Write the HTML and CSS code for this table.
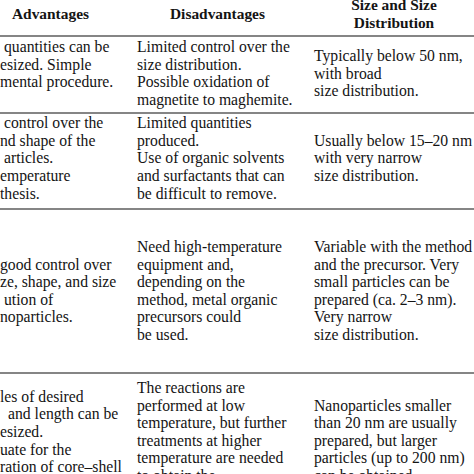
FILE: index.html
```html
<!DOCTYPE html>
<html>
<head>
<meta charset="utf-8">
<link rel="stylesheet" href="styles.css">
</head>
<body>
<div class="table">
  <div class="row head">
    <div class="cell c1">Advantages</div>
    <div class="cell c2">Disadvantages</div>
    <div class="cell c3">Size and Size<br>Distribution</div>
  </div>
  <div class="row r1">
    <div class="cell c1"><div class="l i4">quantities can be</div><div class="l">esized. Simple</div><div class="l">mental procedure.</div></div>
    <div class="cell c2">Limited control over the<br>size distribution.<br>Possible oxidation of<br>magnetite to maghemite.</div>
    <div class="cell c3">Typically below 50 nm,<br>with broad<br>size distribution.</div>
  </div>
  <div class="row r2">
    <div class="cell c1"><div class="l i4">control over the</div><div class="l">nd shape of the</div><div class="l i4">articles.</div><div class="l">emperature</div><div class="l">thesis.</div></div>
    <div class="cell c2">Limited quantities<br>produced.<br>Use of organic solvents<br>and surfactants that can<br>be difficult to remove.</div>
    <div class="cell c3">Usually below 15–20 nm<br>with very narrow<br>size distribution.</div>
  </div>
  <div class="row r3">
    <div class="cell c1"><div class="l">good control over</div><div class="l">ze, shape, and size</div><div class="l i4">ution of</div><div class="l">noparticles.</div></div>
    <div class="cell c2">Need high-temperature<br>equipment and,<br>depending on the<br>method, metal organic<br>precursors could<br>be used.</div>
    <div class="cell c3">Variable with the method<br>and the precursor. Very<br>small particles can be<br>prepared (ca. 2–3 nm).<br>Very narrow<br>size distribution.</div>
  </div>
  <div class="row r4">
    <div class="cell c1"><div class="l">les of desired</div><div class="l i8">and length can be</div><div class="l">esized.</div><div class="l">uate for the</div><div class="l">ration of core–shell</div><div class="l">noparticles.</div></div>
    <div class="cell c2">The reactions are<br>performed at low<br>temperature, but further<br>treatments at higher<br>temperature are needed<br>to obtain the<br>crystalline structure.</div>
    <div class="cell c3">Nanoparticles smaller<br>than 20 nm are usually<br>prepared, but larger<br>particles (up to 200 nm)<br>can be obtained.</div>
  </div>
</div>
</body>
</html>
```
FILE: styles.css
```css
html, body {
  margin: 0;
  padding: 0;
  background: #ffffff;
}
body {
  font-family: "Liberation Serif", "Times New Roman", serif;
  font-size: 15.7px;
  line-height: 17.6px;
  color: #141414;
  overflow: hidden;
}
.table {
  width: 474px;
  margin-top: -4px;
  overflow: hidden;
}
.row {
  display: grid;
  grid-template-columns: 137px 177px 160px;
  border-bottom: 2px solid #858585;
}
.cell {
  white-space: nowrap;
}
.l {
  white-space: nowrap;
}
.i4 {
  padding-left: 4px;
}
.i8 {
  padding-left: 8px;
}
.head {
  align-items: center;
  font-weight: bold;
  font-size: 15.4px;
  padding-bottom: 3.8px;
}
.head .c1 {
  padding-left: 12px;
}
.head .c2 {
  padding-left: 33px;
}
.head .c3 {
  text-align: center;
}
.r1 {
  padding: 1.2px 0 3.4px;
  align-items: start;
}
.r1 .c3 {
  align-self: center;
}
.r2 {
  padding: 0.2px 0 5.8px;
  align-items: start;
}
.r2 .c3 {
  align-self: center;
}
.r3 {
  padding: 28.2px 0 28.2px;
  align-items: center;
}
.r4 {
  padding-top: 5.2px;
  align-items: center;
  border-bottom: none;
}
```
